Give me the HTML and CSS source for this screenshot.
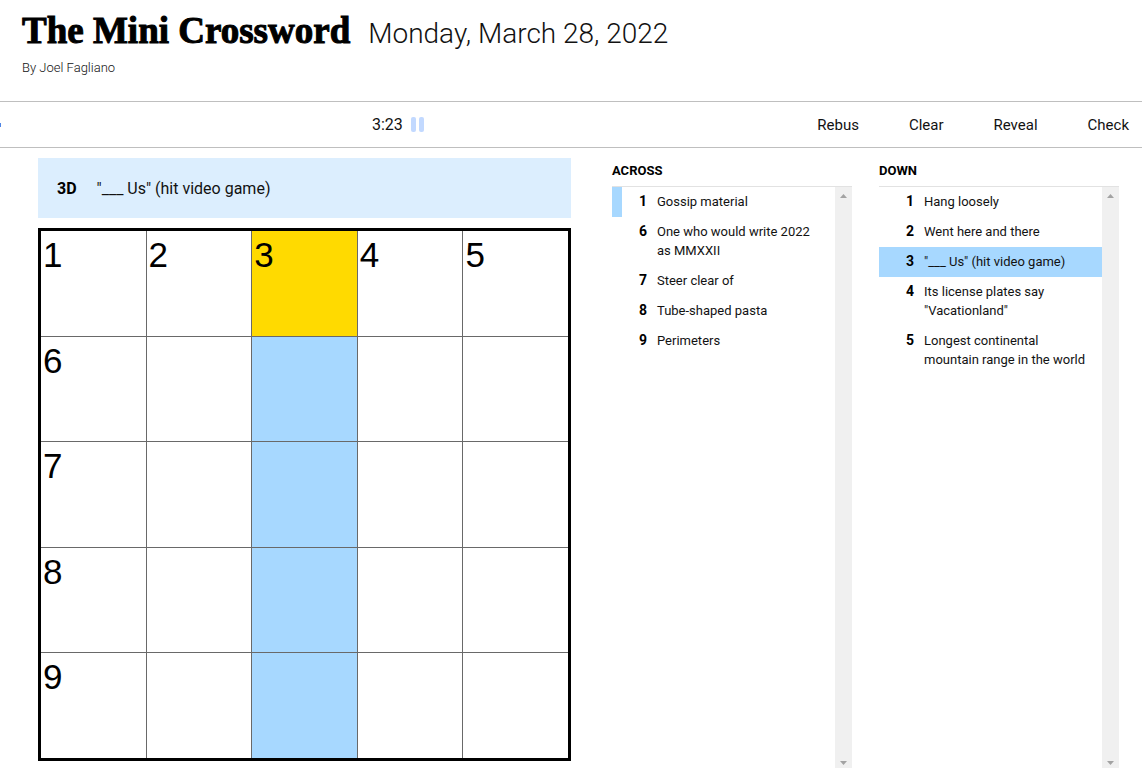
FILE: index.html
```
<!DOCTYPE html>
<html lang="en">
<head>
<meta charset="utf-8">
<title>The Mini Crossword</title>
<link rel="stylesheet" href="styles.css">
</head>
<body>
<header class="masthead">
  <div class="headline">
    <h1 class="title">The Mini Crossword</h1>
    <span class="date">Monday, March 28, 2022</span>
  </div>
  <p class="byline">By Joel Fagliano</p>
</header>
<nav class="toolbar">
  <span class="edge-mark"></span>
  <div class="timer">
    <span>3:23</span>
    <button class="pause" type="button" aria-label="Pause">
      <svg width="13" height="15" viewBox="0 0 13 15"><rect width="5" height="15" rx="2" fill="#c2d9ff"/><rect x="8" width="5" height="15" rx="2" fill="#c2d9ff"/></svg>
    </button>
  </div>
  <div class="tools">
    <button class="tool" type="button">Rebus</button>
    <button class="tool" type="button">Clear</button>
    <button class="tool" type="button">Reveal</button>
    <button class="tool" type="button">Check</button>
  </div>
</nav>
<main class="game">
  <section class="puzzle">
    <div class="clue-bar"><b class="clue-bar-label">3D</b><span>"___ Us" (hit video game)</span></div>
    <div class="board">
      <div class="cell">1</div><div class="cell">2</div><div class="cell current">3</div><div class="cell">4</div><div class="cell">5</div>
      <div class="cell">6</div><div class="cell"></div><div class="cell word"></div><div class="cell"></div><div class="cell"></div>
      <div class="cell">7</div><div class="cell"></div><div class="cell word"></div><div class="cell"></div><div class="cell"></div>
      <div class="cell">8</div><div class="cell"></div><div class="cell word"></div><div class="cell"></div><div class="cell"></div>
      <div class="cell">9</div><div class="cell"></div><div class="cell word"></div><div class="cell"></div><div class="cell"></div>
    </div>
  </section>
  <section class="clues">
    <h2 class="clues-title">ACROSS</h2>
    <div class="clues-body">
      <ol class="clue-list">
        <li class="clue related"><b class="num">1</b><span>Gossip material</span></li>
        <li class="clue"><b class="num">6</b><span>One who would write 2022 as MMXXII</span></li>
        <li class="clue"><b class="num">7</b><span>Steer clear of</span></li>
        <li class="clue"><b class="num">8</b><span>Tube-shaped pasta</span></li>
        <li class="clue"><b class="num">9</b><span>Perimeters</span></li>
      </ol>
      <div class="track">
        <svg width="7" height="4" viewBox="0 0 7 4"><path d="M0 4 3.500 0 7 4z" fill="#a3a3a3"/></svg>
        <svg width="7" height="4" viewBox="0 0 7 4"><path d="M0 0h7L3.500 4z" fill="#a3a3a3"/></svg>
      </div>
    </div>
  </section>
  <section class="clues">
    <h2 class="clues-title">DOWN</h2>
    <div class="clues-body">
      <ol class="clue-list">
        <li class="clue"><b class="num">1</b><span>Hang loosely</span></li>
        <li class="clue"><b class="num">2</b><span>Went here and there</span></li>
        <li class="clue selected"><b class="num">3</b><span>"___ Us" (hit video game)</span></li>
        <li class="clue"><b class="num">4</b><span>Its license plates say "Vacationland"</span></li>
        <li class="clue"><b class="num">5</b><span>Longest continental mountain range in the world</span></li>
      </ol>
      <div class="track">
        <svg width="7" height="4" viewBox="0 0 7 4"><path d="M0 4 3.500 0 7 4z" fill="#a3a3a3"/></svg>
        <svg width="7" height="4" viewBox="0 0 7 4"><path d="M0 0h7L3.500 4z" fill="#a3a3a3"/></svg>
      </div>
    </div>
  </section>
</main>
</body>
</html>
```
FILE: styles.css
```
* { box-sizing: border-box; }
body {
  display: flex;
  flex-direction: column;
  min-height: 100vh;
  margin: 0;
  background: #fff;
  color: #121212;
  font-family: Roboto, "Liberation Sans", sans-serif;
  font-size: 13px;
}
button { padding: 0; border: 0; background: none; color: inherit; font: inherit; }
.masthead { padding: 6px 22px 24px; }
.headline { display: flex; align-items: baseline; gap: 18px; }
.title {
  margin: 0;
  color: #000;
  font: bold 37px/50px "Liberation Serif", serif;
  -webkit-text-stroke: 1px #000;
}
.date { font-size: 28px; font-weight: 300; }
.byline { margin: 3px 0 0; line-height: 18px; font-weight: 300; }
.toolbar {
  display: grid;
  grid-template-columns: 372px 1fr auto;
  align-items: center;
  height: 47px;
  border: solid #bfbfbf;
  border-width: 1px 0;
  font-size: 15px;
}
.edge-mark { width: 1px; height: 4px; background: #4f85e5; }
.timer { display: flex; align-items: center; gap: 8px; font-size: 16px; }
.pause { display: flex; }
.tools { display: flex; gap: 50px; padding-right: 13px; }
.game {
  flex: 1;
  display: grid;
  grid-template-columns: 547fr 240fr 240fr;
  column-gap: 27px;
  padding: 10px 23px 0 38px;
}
.puzzle { margin-right: 14px; margin-bottom: 6px; }
.clue-bar {
  display: flex;
  align-items: center;
  gap: 20px;
  height: 60px;
  margin-bottom: 10px;
  padding-left: 19px;
  background: #dceefe;
  font-size: 16px;
}
.clue-bar-label { color: #000; }
.board {
  display: grid;
  grid-template: repeat(5, 1fr) / repeat(5, 1fr);
  gap: 1px;
  aspect-ratio: 1;
  border: 3px solid #000;
  background: #696969;
}
.cell {
  padding: 4px 2px;
  background: #fff;
  color: #000;
  font: 35px/40px "Liberation Sans", sans-serif;
}
.cell.current { background: #ffda00; }
.cell.word { background: #a7d8ff; }
.clues { display: flex; flex-direction: column; }
.clues-title {
  margin: 0;
  padding: 4px 0 6px;
  border-bottom: 1px solid #e2e2e2;
  color: #000;
  font-size: 13px;
  line-height: 18px;
}
.clues-body { flex: 1; display: flex; }
.clue-list { flex: 1; margin: 0; padding: 0; list-style: none; }
.clue {
  display: flex;
  gap: 10px;
  padding: 5px 16px 6px 0;
  border-left: 10px solid transparent;
  line-height: 19px;
}
.clue.related { border-color: #a7d8ff; }
.clue.selected { border-color: #a7d8ff; background: #a7d8ff; }
.num { flex: none; width: 25px; color: #000; font-size: 14px; text-align: right; }
.track {
  display: flex;
  flex-direction: column;
  justify-content: space-between;
  align-items: center;
  width: 17px;
  padding: 7px 0 3px;
  background: #f0f0f0;
}
```
